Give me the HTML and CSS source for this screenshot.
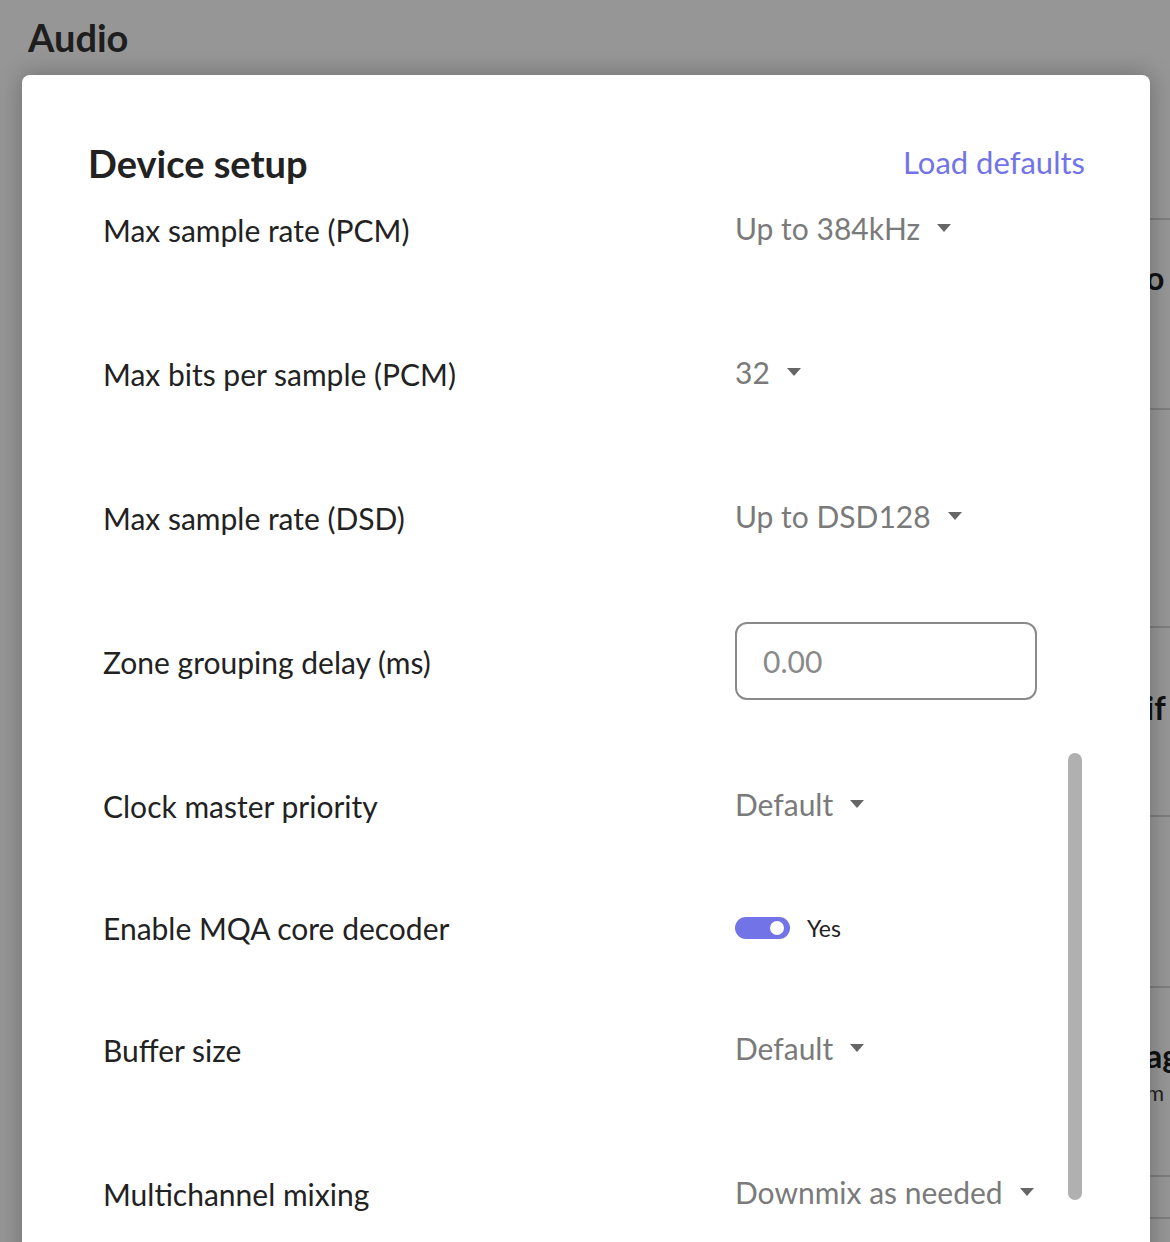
FILE: index.html
```html
<!DOCTYPE html>
<html>
	<head>
		<meta charset="UTF-8">
		<title>Audio - Device setup</title>
		<link rel="stylesheet" href="styles.css">
	</head>
	<body>
		<!-- page behind the dialog -->
		<div class="page">
			<h1 class="page-title">Audio</h1>
			<div class="bg-list">
				<div class="bg-row bg-row_1"><span class="bg-name">o</span></div>
				<div class="bg-row bg-row_2"></div>
				<div class="bg-row bg-row_3"><span class="bg-name">if</span></div>
				<div class="bg-row bg-row_4"></div>
				<div class="bg-row bg-row_5">
					<span class="bg-name">ag</span>
					<span class="bg-sub">m</span>
				</div>
				<div class="bg-row bg-row_6"></div>
				<div class="bg-row bg-row_7"></div>
			</div>
		</div>

		<!-- dialog -->
		<div class="dialog">
			<div class="dialog-head">
				<h2 class="dialog-title">Device setup</h2>
				<a class="link-btn">Load defaults</a>
			</div>
			<div class="setting-list">
				<div class="setting">
					<span class="setting-label">Max sample rate (PCM)</span>
					<span class="dropdown">Up to 384kHz<i class="caret"></i></span>
				</div>
				<div class="setting">
					<span class="setting-label">Max bits per sample (PCM)</span>
					<span class="dropdown">32<i class="caret"></i></span>
				</div>
				<div class="setting">
					<span class="setting-label">Max sample rate (DSD)</span>
					<span class="dropdown">Up to DSD128<i class="caret"></i></span>
				</div>
				<div class="setting">
					<span class="setting-label">Zone grouping delay (ms)</span>
					<div><input class="text-input" type="text" placeholder="0.00" /></div>
				</div>
				<div class="setting setting_short">
					<span class="setting-label">Clock master priority</span>
					<span class="dropdown">Default<i class="caret"></i></span>
				</div>
				<div class="setting setting_short">
					<span class="setting-label">Enable MQA core decoder</span>
					<span class="switch-wrap">
						<span class="switch"><span class="switch-knob"></span></span>
						<span class="switch-text">Yes</span>
					</span>
				</div>
				<div class="setting">
					<span class="setting-label">Buffer size</span>
					<span class="dropdown">Default<i class="caret"></i></span>
				</div>
				<div class="setting">
					<span class="setting-label">Multichannel mixing</span>
					<span class="dropdown">Downmix as needed<i class="caret"></i></span>
				</div>
			</div>
			<div class="scroll-thumb"></div>
		</div>
	</body>
</html>
```

FILE: styles.css
```css
* {
	padding: 0;
	margin: 0;
	box-sizing: border-box;
}
html,body {
	height: 100%;
}
body {
	position: relative;
	overflow: hidden;
	background: #969696;
	font-family: Lato, "Open Sans", sans-serif;
	color: #222222;
}

/* background page */
.page-title {
	padding: 14px 0 0 28px;
	font-size: 38px;
	line-height: 46px;
	font-weight: 700;
	color: #1e1e1e;
}
.bg-list {
	margin: 158px 0 0 40px;
}
.bg-row {
	display: grid;
	grid-template-columns: 1106px 1fr;
	align-content: start;
	border-top: 2px solid #7e7e7e;
	padding-top: 40px;
	overflow: hidden;
	white-space: nowrap;
}
.bg-name {
	grid-column: 2;
	font-size: 32px;
	line-height: 36px;
	font-weight: 700;
	color: #111111;
}
.bg-sub {
	grid-column: 2;
	font-size: 22px;
	line-height: 38px;
	color: #222222;
}
.bg-row_1 { height: 190px; }
.bg-row_2 { height: 218px; }
.bg-row_3 { height: 189px; padding-top: 62px; }
.bg-row_4 { height: 171px; }
.bg-row_5 { height: 189px; padding-top: 50px; }
.bg-row_6 { height: 30px; }
.bg-row_7 { height: 60px; }

/* dialog */
.dialog {
	position: absolute;
	left: 22px;
	top: 75px;
	width: 1128px;
	height: 1220px;
	background: #ffffff;
	border-radius: 8px;
	box-shadow: 0 0 24px rgba(0, 0, 0, 0.28);
}
.dialog-head {
	display: flex;
	justify-content: space-between;
	align-items: center;
	padding: 62px 65px 0 66px;
	height: 114px;
}
.dialog-title {
	font-size: 38px;
	line-height: 52px;
	font-weight: 700;
	color: #222222;
}
.link-btn {
	font-size: 31px;
	line-height: 52px;
	color: #7373e8;
	margin-top: -2px;
	cursor: pointer;
}
.setting-list {
	margin-top: 21px;
	padding-left: 81px;
}
.setting {
	display: grid;
	grid-template-columns: 632px 1fr;
	align-items: start;
	height: 144px;
	font-size: 30px;
	line-height: 40px;
}
.setting_short {
	height: 122px;
}
.setting-label {
	color: #222222;
}
.dropdown {
	display: inline-flex;
	align-items: center;
	gap: 17px;
	margin-top: -2px;
	color: #7a7a7a;
	cursor: pointer;
}
.caret {
	display: inline-block;
	width: 0;
	height: 0;
	border-left: 7px solid transparent;
	border-right: 7px solid transparent;
	border-top: 8px solid #666666;
}
.text-input {
	display: block;
	width: 302px;
	height: 78px;
	margin-top: -20px;
	padding-left: 26px;
	border: 2px solid #8a8a8a;
	border-radius: 12px;
	font-family: Lato, "Open Sans", sans-serif;
	font-size: 30px;
	color: #222222;
	outline: none;
}
.text-input::placeholder {
	color: #8a8a8a;
}
.switch-wrap {
	display: inline-flex;
	align-items: center;
	gap: 17px;
	height: 40px;
}
.switch {
	display: flex;
	align-items: center;
	justify-content: flex-end;
	width: 55px;
	height: 22px;
	padding-right: 6px;
	border-radius: 11px;
	background: #7373e8;
}
.switch-knob {
	width: 14px;
	height: 14px;
	border-radius: 50%;
	background: #ffffff;
}
.switch-text {
	font-size: 23px;
	color: #222222;
}
.scroll-thumb {
	position: absolute;
	left: 1046px;
	top: 678px;
	width: 14px;
	height: 447px;
	border-radius: 7px;
	background: #b0b0b0;
}
```
